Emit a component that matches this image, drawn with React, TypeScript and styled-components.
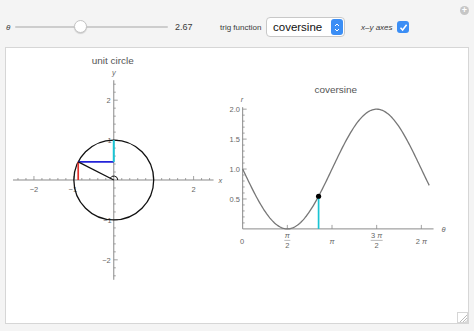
import React from 'react'
import styled, { createGlobalStyle } from 'styled-components'

const GlobalStyle = createGlobalStyle`
  html, body {
    margin: 0;
    padding: 0;
    background: #f4f4f4;
  }
  body {
    font-family: 'Liberation Sans', Arial, sans-serif;
  }
`

const THETA = 2.67

const Frame = styled.div`
  position: relative;
  width: 474px;
  height: 331px;
  background: #f4f4f4;
  overflow: hidden;
`

const Controls = styled.div`
  display: flex;
  align-items: center;
  box-sizing: border-box;
  height: 47px;
  padding-top: 7px;
`

const Label = styled.div<{ $w: number; $ml?: number; $italic?: boolean; $size?: number }>`
  flex: none;
  width: ${({ $w }) => $w}px;
  margin-left: ${({ $ml }) => $ml || 0}px;
  font-size: ${({ $size }) => $size || 8}px;
  font-style: ${({ $italic }) => ($italic ? 'italic' : 'normal')};
  color: #3a3a3a;
  white-space: nowrap;
`

const Track = styled.div`
  position: relative;
  flex: none;
  width: 153px;
  height: 2px;
  background: #cdcdcd;
  border-radius: 1px;
`

const Thumb = styled.div`
  position: absolute;
  top: -6px;
  width: 13px;
  height: 13px;
  margin-left: -7px;
  box-sizing: border-box;
  border-radius: 50%;
  background: #fff;
  border: 1px solid #c4c4c4;
  box-shadow: 0 1px 1px rgba(0, 0, 0, 0.15);
`

const Popup = styled.div`
  display: flex;
  align-items: center;
  justify-content: space-between;
  flex: none;
  box-sizing: border-box;
  width: 79px;
  height: 20px;
  padding: 1px 1px 1px 6px;
  background: #fff;
  border: 1px solid #c8c8c8;
  border-radius: 4px;
  font-size: 11.5px;
  color: #111;
`

const Stepper = styled.div`
  display: flex;
  align-items: center;
  justify-content: center;
  width: 12px;
  height: 16px;
  background: #3b8ef5;
  border-radius: 3px;
`

const Checkbox = styled.div`
  display: flex;
  align-items: center;
  justify-content: center;
  flex: none;
  width: 12px;
  height: 12px;
  background: #3b8ef5;
  border-radius: 3px;
`

const PlusButton = styled.div`
  position: absolute;
  top: 6px;
  right: 5px;
  width: 9px;
  height: 9px;
  border-radius: 50%;
  background: #c6c6c6;
  color: #fff;
  font-size: 9px;
  line-height: 9px;
  text-align: center;
  font-weight: bold;
`

const Panel = styled.div`
  position: relative;
  display: flex;
  box-sizing: border-box;
  width: 464px;
  height: 277px;
  margin-left: 5px;
  background: #fff;
  border: 1px solid #d6d6d6;
`

const Grip = styled.svg`
  position: absolute;
  right: 0;
  bottom: 0;
`

const TickLabel = styled.text<{ $italic?: boolean }>`
  font-family: 'Liberation Sans', Arial, sans-serif;
  font-size: 7.5px;
  font-style: ${({ $italic }) => ($italic ? 'italic' : 'normal')};
  fill: #666;
`

const Italic = styled.tspan`
  font-style: italic;
`

const PlotTitle = styled.text`
  font-family: 'Liberation Sans', Arial, sans-serif;
  font-size: 10px;
  fill: #555;
`

const tick = { stroke: '#8a8a8a', strokeWidth: 0.8 }

function UnitCircle() {
  const ox = 114
  const oy = 180
  const s = 40
  const px = ox + s * Math.cos(THETA)
  const py = oy - s * Math.sin(THETA)
  const ticks = []
  for (let i = -12; i <= 12; i++) {
    if (i === 0) continue
    const len = i % 5 === 0 ? 4 : 2
    ticks.push(<line key={'x' + i} x1={ox + i * 8} y1={oy} x2={ox + i * 8} y2={oy - len} {...tick} />)
    ticks.push(<line key={'y' + i} x1={ox} y1={oy + i * 8} x2={ox + len} y2={oy + i * 8} {...tick} />)
  }
  const ax = 4 * Math.cos(THETA)
  const ay = 4 * Math.sin(THETA)
  return (
    <svg width={220} height={275} viewBox="6 48 220 275">
      <PlotTitle x={113} y={64} textAnchor="middle">
        unit circle
      </PlotTitle>
      <line x1={13} y1={oy} x2={214} y2={oy} stroke="#8a8a8a" strokeWidth={1} />
      <line x1={ox} y1={80} x2={ox} y2={280} stroke="#8a8a8a" strokeWidth={1} />
      {ticks}
      <TickLabel x={219} y={183} $italic>x</TickLabel>
      <TickLabel x={114} y={75} textAnchor="middle" $italic>y</TickLabel>
      <TickLabel x={34} y={192} textAnchor="middle">−2</TickLabel>
      <TickLabel x={73} y={192} textAnchor="middle">−1</TickLabel>
      <TickLabel x={194} y={192} textAnchor="middle">2</TickLabel>
      <TickLabel x={111} y={103} textAnchor="end">2</TickLabel>
      <TickLabel x={112} y={143} textAnchor="end">1</TickLabel>
      <TickLabel x={112} y={223} textAnchor="end">−1</TickLabel>
      <TickLabel x={111} y={263} textAnchor="end">−2</TickLabel>
      <circle cx={ox} cy={oy} r={s} fill="none" stroke="#111" strokeWidth={1.3} />
      <line x1={px} y1={py} x2={px} y2={oy} stroke="#e0302c" strokeWidth={1.7} />
      <line x1={px} y1={py} x2={ox} y2={py} stroke="#2323d8" strokeWidth={1.7} />
      <line x1={ox} y1={py} x2={ox} y2={oy - s} stroke="#19c4d4" strokeWidth={2} />
      <line x1={ox} y1={oy} x2={px} y2={py} stroke="#111" strokeWidth={1.3} />
      <path d={`M ${ox + 4} ${oy} A 4 4 0 0 0 ${ox + ax} ${oy - ay}`} fill="none" stroke="#111" strokeWidth={1} />
    </svg>
  )
}

function Coversine() {
  const ox = 242.7
  const oy = 229
  const sx = 28.5
  const sy = 60
  const pts: string[] = []
  for (let t = 0; t <= 6.57; t += 0.04) {
    pts.push(`${(ox + t * sx).toFixed(2)},${(oy - (1 - Math.sin(t)) * sy).toFixed(2)}`)
  }
  const dx = ox + THETA * sx
  const dy = oy - (1 - Math.sin(THETA)) * sy
  const ticks = []
  for (let i = 1; i <= 20; i++) {
    const len = i % 5 === 0 ? 4 : 2
    ticks.push(<line key={'y' + i} x1={ox} y1={oy - i * 6} x2={ox + len} y2={oy - i * 6} {...tick} />)
  }
  for (let k = 1; k <= 4; k++) {
    const x = ox + (k * Math.PI * sx) / 2
    ticks.push(<line key={'x' + k} x1={x} y1={oy} x2={x} y2={oy - 4} {...tick} />)
  }
  const half = ox + (Math.PI * sx) / 2
  const threeHalf = ox + (3 * Math.PI * sx) / 2
  return (
    <svg width={243} height={275} viewBox="226 48 243 275">
      <PlotTitle x={336} y={93} textAnchor="middle">
        coversine
      </PlotTitle>
      <line x1={ox} y1={oy} x2={434} y2={oy} stroke="#8a8a8a" strokeWidth={1} />
      <line x1={ox} y1={oy} x2={ox} y2={107} stroke="#8a8a8a" strokeWidth={1} />
      {ticks}
      <TickLabel x={242} y={102} textAnchor="middle" $italic>r</TickLabel>
      <TickLabel x={442} y={232} $italic>θ</TickLabel>
      <TickLabel x={240} y={112} textAnchor="end">2.0</TickLabel>
      <TickLabel x={240} y={142} textAnchor="end">1.5</TickLabel>
      <TickLabel x={240} y={172} textAnchor="end">1.0</TickLabel>
      <TickLabel x={240} y={202} textAnchor="end">0.5</TickLabel>
      <TickLabel x={242} y={244} textAnchor="middle">0</TickLabel>
      <TickLabel x={half} y={238} textAnchor="middle" $italic>π</TickLabel>
      <line x1={half - 3} y1={240.5} x2={half + 3} y2={240.5} stroke="#888" strokeWidth={0.6} />
      <TickLabel x={half} y={248} textAnchor="middle">2</TickLabel>
      <TickLabel x={ox + Math.PI * sx} y={244} textAnchor="middle" $italic>π</TickLabel>
      <TickLabel x={threeHalf} y={238} textAnchor="middle">
        3 <Italic>π</Italic>
      </TickLabel>
      <line x1={threeHalf - 6} y1={240.5} x2={threeHalf + 6} y2={240.5} stroke="#888" strokeWidth={0.6} />
      <TickLabel x={threeHalf} y={248} textAnchor="middle">2</TickLabel>
      <TickLabel x={ox + 2 * Math.PI * sx} y={244} textAnchor="middle">
        2 <Italic>π</Italic>
      </TickLabel>
      <polyline points={pts.join(' ')} fill="none" stroke="#777" strokeWidth={1.3} />
      <line x1={dx} y1={dy} x2={dx} y2={oy} stroke="#19c4d4" strokeWidth={1.7} />
      <circle cx={dx} cy={dy} r={2.6} fill="#000" />
    </svg>
  )
}

export default function App() {
  return (
    <Frame>
      <GlobalStyle />
      <PlusButton>+</PlusButton>
      <Controls>
        <Label $w={9} $ml={6} $italic>
          θ
        </Label>
        <Track>
          <Thumb style={{ left: `${(THETA / (2 * Math.PI)) * 153 + 1}px` }} />
        </Track>
        <Label $w={45} $ml={7} $size={9}>
          {THETA.toFixed(2)}
        </Label>
        <Label $w={46}>trig function</Label>
        <Popup>
          coversine
          <Stepper>
            <svg width={6} height={11} viewBox="0 0 6 11">
              <path d="M1 4 L3 2 L5 4 M1 7 L3 9 L5 7" fill="none" stroke="#fff" strokeWidth={1} />
            </svg>
          </Stepper>
        </Popup>
        <Label $w={36} $ml={16} $italic>
          x–y axes
        </Label>
        <Checkbox>
          <svg width={9} height={9} viewBox="0 0 9 9">
            <path d="M1.5 4.8 L3.6 7 L7.6 1.8" fill="none" stroke="#fff" strokeWidth={1.5} />
          </svg>
        </Checkbox>
      </Controls>
      <Panel>
        <UnitCircle />
        <Coversine />
        <Grip width={11} height={11} viewBox="0 0 11 11">
          <rect x={0.5} y={0.5} width={10} height={10} fill="#fff" stroke="#d6d6d6" />
          <path d="M3 10 L10 3 M6 10 L10 6 M8.5 10 L10 8.5" stroke="#aaa" strokeWidth={0.8} />
        </Grip>
      </Panel>
    </Frame>
  )
}
